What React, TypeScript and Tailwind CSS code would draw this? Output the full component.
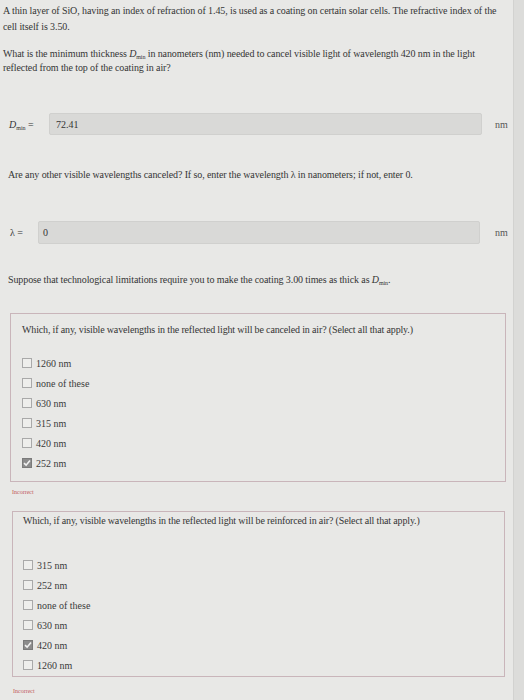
import React from "react";

const serif = { fontFamily: '"Liberation Serif", "Times New Roman", serif' };

function Box({ checked }: { checked?: boolean }) {
  return checked ? (
    <span className="w-[10px] h-[10px] bg-[#8c8c8c] border border-[#7a7a7a] flex items-center justify-center shrink-0">
      <svg width="8" height="8" viewBox="0 0 8 8">
        <path d="M1 4.2 L3.1 6.2 L7 1.5" stroke="#f2f2f2" strokeWidth="1.6" fill="none" />
      </svg>
    </span>
  ) : (
    <span className="w-[10px] h-[10px] bg-[#eeeeec] border border-[#a9a9a9] shrink-0" />
  );
}

function Option({ label, checked }: { label: string; checked?: boolean }) {
  return (
    <div className="h-[20px] flex items-center gap-[4px]">
      <Box checked={checked} />
      <span className="text-[10px] text-[#3a3a3a]">{label}</span>
    </div>
  );
}

function Dmin() {
  return (
    <span>
      <i>D</i>
      <span className="text-[6px] relative top-[2px] leading-[0px]">min</span>
    </span>
  );
}

export default function App() {
  return (
    <div className="w-[524px] h-[700px] bg-[#e8e8e6] flex overflow-hidden text-[#353535]" style={serif}>
      <div className="flex-1 flex flex-col">
        <div className="pl-[3px] pr-[6px] pt-[3px] text-[10px] tracking-[-0.1px] leading-[16px]">
          <p>
            A thin layer of SiO, having an index of refraction of 1.45, is used as a coating on certain solar cells. The
            refractive index of the cell itself is 3.50.
          </p>
          <p className="mt-[12px] leading-[14px]">
            What is the minimum thickness <Dmin /> in nanometers (nm) needed to cancel visible light of wavelength 420 nm in
            the light reflected from the top of the coating in air?
          </p>
        </div>

        <div className="mt-[38px] flex items-center h-[22px] text-[10px]">
          <span className="w-[49px] pl-[9px]">
            <Dmin /> =
          </span>
          <div className="w-[433px] h-[22px] bg-[#d9d9d7] border border-[#d0d0ce] rounded-[2px] flex items-center pl-[6px]">
            72.41
          </div>
          <span className="ml-[13px] text-[#555]">nm</span>
        </div>

        <p className="mt-[32px] pl-[8px] text-[10px] tracking-[-0.1px]">
          Are any other visible wavelengths canceled? If so, enter the wavelength λ in nanometers; if not, enter 0.
        </p>

        <div className="mt-[39px] flex items-center h-[23px] text-[10px]">
          <span className="w-[38px] pl-[10px]">λ =</span>
          <div className="w-[442px] h-[23px] bg-[#d9d9d7] border border-[#d0d0ce] rounded-[2px] flex items-center pl-[4px]">
            0
          </div>
          <span className="ml-[15px] text-[#555]">nm</span>
        </div>

        <p className="mt-[28px] pl-[8px] text-[10px] tracking-[-0.1px]">
          Suppose that technological limitations require you to make the coating 3.00 times as thick as <Dmin />.
        </p>

        <div className="mt-[26px] ml-[10px] w-[496px] h-[169px] border border-[#c9b5ba] flex flex-col pl-[11px] pt-[8px]">
          <p className="text-[10px] tracking-[-0.15px] h-[14px]">
            Which, if any, visible wavelengths in the reflected light will be canceled in air? (Select all that apply.)
          </p>
          <div className="mt-[17px] flex flex-col">
            <Option label="1260 nm" />
            <Option label="none of these" />
            <Option label="630 nm" />
            <Option label="315 nm" />
            <Option label="420 nm" />
            <Option checked label="252 nm" />
          </div>
        </div>
        <p className="ml-[12px] mt-[6px] text-[6px] text-[#c05656] leading-[8px]">Incorrect</p>

        <div className="mt-[15px] ml-[12px] w-[493px] h-[166px] border border-[#c9b5ba] flex flex-col pl-[10px] pt-[1px]">
          <p className="text-[10px] tracking-[-0.15px] h-[14px]">
            Which, if any, visible wavelengths in the reflected light will be reinforced in air? (Select all that apply.)
          </p>
          <div className="mt-[28px] flex flex-col">
            <Option label="315 nm" />
            <Option label="252 nm" />
            <Option label="none of these" />
            <Option label="630 nm" />
            <Option checked label="420 nm" />
            <Option label="1260 nm" />
          </div>
        </div>
        <p className="ml-[13px] mt-[10px] text-[6px] text-[#c05656] leading-[8px]">Incorrect</p>
      </div>
      <div className="w-[11px] h-full bg-[#dcdcda] border-l border-[#d2d2d0]" />
    </div>
  );
}
